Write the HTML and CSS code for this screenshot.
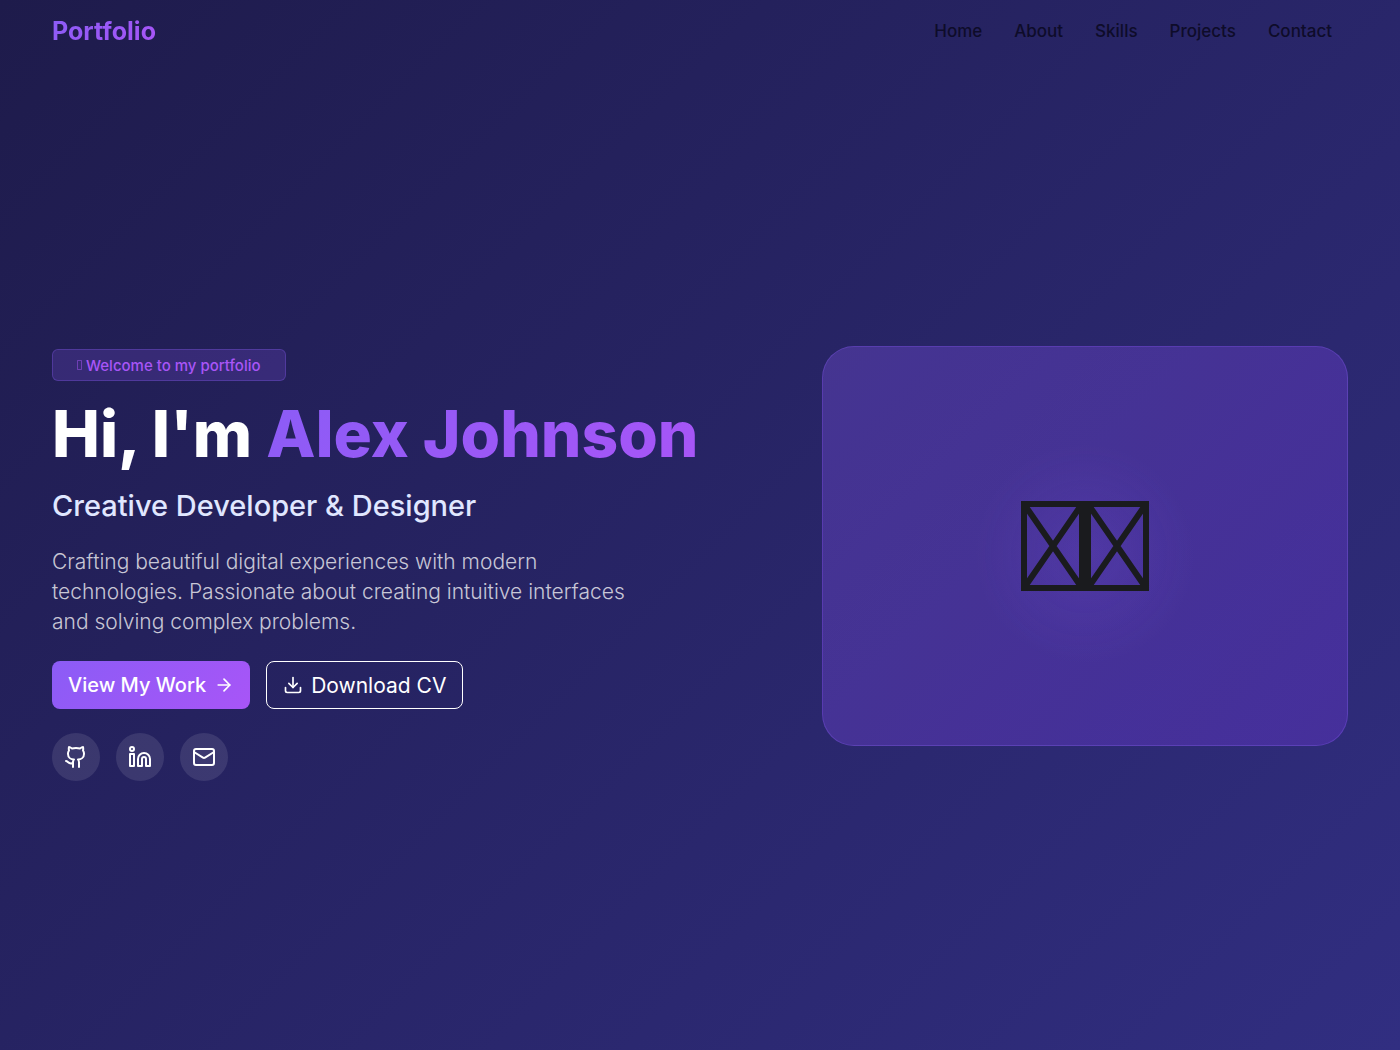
FILE: index.html
```html
<!DOCTYPE html>
<html lang="en">
<head>
    <meta charset="utf-8">
    <meta name="viewport" content="width=device-width, initial-scale=1">
    <link rel="stylesheet" href="styles.css">
    <title>Portfolio</title>
</head>
<body>
<header class="header">
    <div class="container header-inner">
        <a class="brand" href="#home">Portfolio</a>
        <nav class="nav">
            <a href="#home">Home</a>
            <a href="#about">About</a>
            <a href="#skills">Skills</a>
            <a href="#projects">Projects</a>
            <a href="#contact">Contact</a>
        </nav>
    </div>
</header>

<main class="hero" id="home">
    <div class="container row">
        <section class="intro">
            <div class="badge">
                <svg class="badge-icon" viewBox="0 0 5 10" aria-hidden="true"><path d="M.5.5h4v9h-4z"/></svg>
                <span>Welcome to my portfolio</span>
            </div>
            <h1 class="title">Hi, I'm <span class="name">Alex Johnson</span></h1>
            <h2 class="subtitle">Creative Developer &amp; Designer</h2>
            <p class="lead">Crafting beautiful digital experiences with modern technologies. Passionate about creating intuitive interfaces and solving complex problems.</p>
            <div class="actions">
                <button class="btn btn-primary" type="button">
                    View My Work
                    <svg class="icon" viewBox="0 0 24 24" aria-hidden="true"><path d="M5 12h14"/><path d="m12 5 7 7-7 7"/></svg>
                </button>
                <button class="btn btn-outline" type="button">
                    <svg class="icon" viewBox="0 0 24 24" aria-hidden="true"><path d="M21 15v4a2 2 0 0 1-2 2H5a2 2 0 0 1-2-2v-4"/><path d="m7 10 5 5 5-5"/><path d="M12 15V3"/></svg>
                    Download CV
                </button>
            </div>
            <div class="socials">
                <a class="social" href="#github" aria-label="GitHub">
                    <svg class="icon" viewBox="0 0 24 24" aria-hidden="true"><path d="M15 22v-4a4.8 4.8 0 0 0-1-3.5c3 0 6-2 6-5.5.08-1.25-.27-2.48-1-3.5.28-1.15.28-2.35 0-3.5 0 0-1 0-3 1.5-2.64-.5-5.36-.5-8 0C6 2 5 2 5 2c-.3 1.15-.3 2.35 0 3.5A5.403 5.403 0 0 0 4 9c0 3.5 3 5.5 6 5.5-.39.49-.68 1.05-.85 1.65-.17.6-.22 1.23-.15 1.85v4"/><path d="M9 18c-4.51 2-5-2-7-2"/></svg>
                </a>
                <a class="social" href="#linkedin" aria-label="LinkedIn">
                    <svg class="icon" viewBox="0 0 24 24" aria-hidden="true"><path d="M16 8a6 6 0 0 1 6 6v7h-4v-7a2 2 0 0 0-4 0v7h-4v-7a6 6 0 0 1 6-6z"/><path d="M2 9h4v12H2z"/><circle cx="4" cy="4" r="2"/></svg>
                </a>
                <a class="social" href="#mail" aria-label="Email">
                    <svg class="icon" viewBox="0 0 24 24" aria-hidden="true"><rect x="2" y="4" width="20" height="16" rx="2"/><path d="m22 7-8.97 5.7a1.94 1.94 0 0 1-2.06 0L2 7"/></svg>
                </a>
            </div>
        </section>
        <section class="visual">
            <div class="card">
                <svg class="figure" viewBox="0 0 128 90" aria-hidden="true">
                    <path d="M3 3h58v84H3zM3 3l58 84M61 3L3 87M67 3h58v84H67zM67 3l58 84M125 3L67 87"/>
                </svg>
            </div>
        </section>
    </div>
</main>
</body>
</html>
```
FILE: styles.css
```css
* {
    box-sizing: border-box;
}

body {
    margin: 0;
    min-height: 100vh;
    font-family: Inter, "Open Sans", sans-serif;
    font-size: 17px;
    color: #1a1b1e;
    background: linear-gradient(135deg, #1e1b4b 0%, #312e81 100%);
}

h1, h2, p {
    margin: 0;
}

a {
    color: inherit;
    text-decoration: none;
}

.container {
    width: 100%;
    max-width: 1320px;
    margin: 0 auto;
}

.header-inner {
    display: flex;
    align-items: center;
    justify-content: space-between;
    height: 61px;
    padding: 0 12px;
}

.brand,
.name {
    color: transparent;
    background: linear-gradient(135deg, #8b5cf6, #a855f7);
    background-clip: text;
    -webkit-background-clip: text;
}

.brand {
    font-size: 25px;
    font-weight: 700;
}

.nav {
    display: flex;
    gap: 32px;
    padding-right: 16px;
    font-weight: 500;
    color: #0e0c29;
}

.hero {
    display: flex;
    align-items: center;
    min-height: calc(100vh - 61px);
    padding-top: 19px;
}

.row {
    display: grid;
    grid-template-columns: 7fr 5fr;
}

.intro {
    display: flex;
    flex-direction: column;
    align-items: flex-start;
    padding: 3px 12px;
}

.visual {
    padding: 0 12px;
}

.badge {
    display: flex;
    align-items: center;
    gap: 4px;
    height: 32px;
    padding: 0 24px;
    font-size: 15px;
    font-weight: 500;
    color: #a855f7;
    background: rgba(139, 92, 246, 0.2);
    border: 1px solid rgba(139, 92, 246, 0.3);
    border-radius: 6px;
}

.badge-icon {
    width: 5px;
    height: 10px;
    fill: none;
    stroke: currentColor;
    stroke-width: 0.5;
}

.title {
    margin-top: 15px;
    font-size: 64px;
    font-weight: 800;
    line-height: 76px;
    color: white;
}

.subtitle {
    margin-top: 14px;
    font-size: 29px;
    font-weight: 500;
    line-height: 40px;
    color: #e0e7ff;
}

.lead {
    max-width: 600px;
    margin-top: 21px;
    font-size: 21px;
    font-weight: 300;
    line-height: 30px;
    color: rgba(255, 255, 255, 0.75);
}

.actions {
    display: flex;
    flex-wrap: wrap;
    gap: 16px;
    margin-top: 24px;
}

.btn {
    display: flex;
    align-items: center;
    gap: 8px;
    height: 48px;
    padding: 0 16px;
    font-family: inherit;
    font-size: 20px;
    color: white;
    border: none;
    border-radius: 8px;
    cursor: pointer;
}

.btn-primary {
    font-weight: 500;
    background: linear-gradient(135deg, #8b5cf6, #a855f7);
}

.btn-outline {
    font-size: 21px;
    background: transparent;
    border: 1px solid white;
}

.icon {
    width: 20px;
    height: 20px;
    fill: none;
    stroke: currentColor;
    stroke-width: 2;
    stroke-linecap: round;
    stroke-linejoin: round;
}

.socials {
    display: flex;
    gap: 16px;
    margin-top: 24px;
}

.social {
    display: flex;
    align-items: center;
    justify-content: center;
    width: 48px;
    height: 48px;
    color: white;
    background: rgba(255, 255, 255, 0.1);
    border-radius: 50%;
}

.social .icon {
    width: 24px;
    height: 24px;
}

.card {
    display: flex;
    align-items: center;
    justify-content: center;
    height: 400px;
    background:
        radial-gradient(circle at 50% 52%, rgba(139, 92, 246, 0.15), transparent 110px),
        linear-gradient(135deg, rgba(139, 92, 246, 0.3), rgba(124, 58, 237, 0.3));
    border: 1px solid rgba(139, 92, 246, 0.3);
    border-radius: 32px;
}

.figure {
    width: 128px;
    height: 90px;
    fill: none;
    stroke: #1a1b1e;
    stroke-width: 6;
}
```
